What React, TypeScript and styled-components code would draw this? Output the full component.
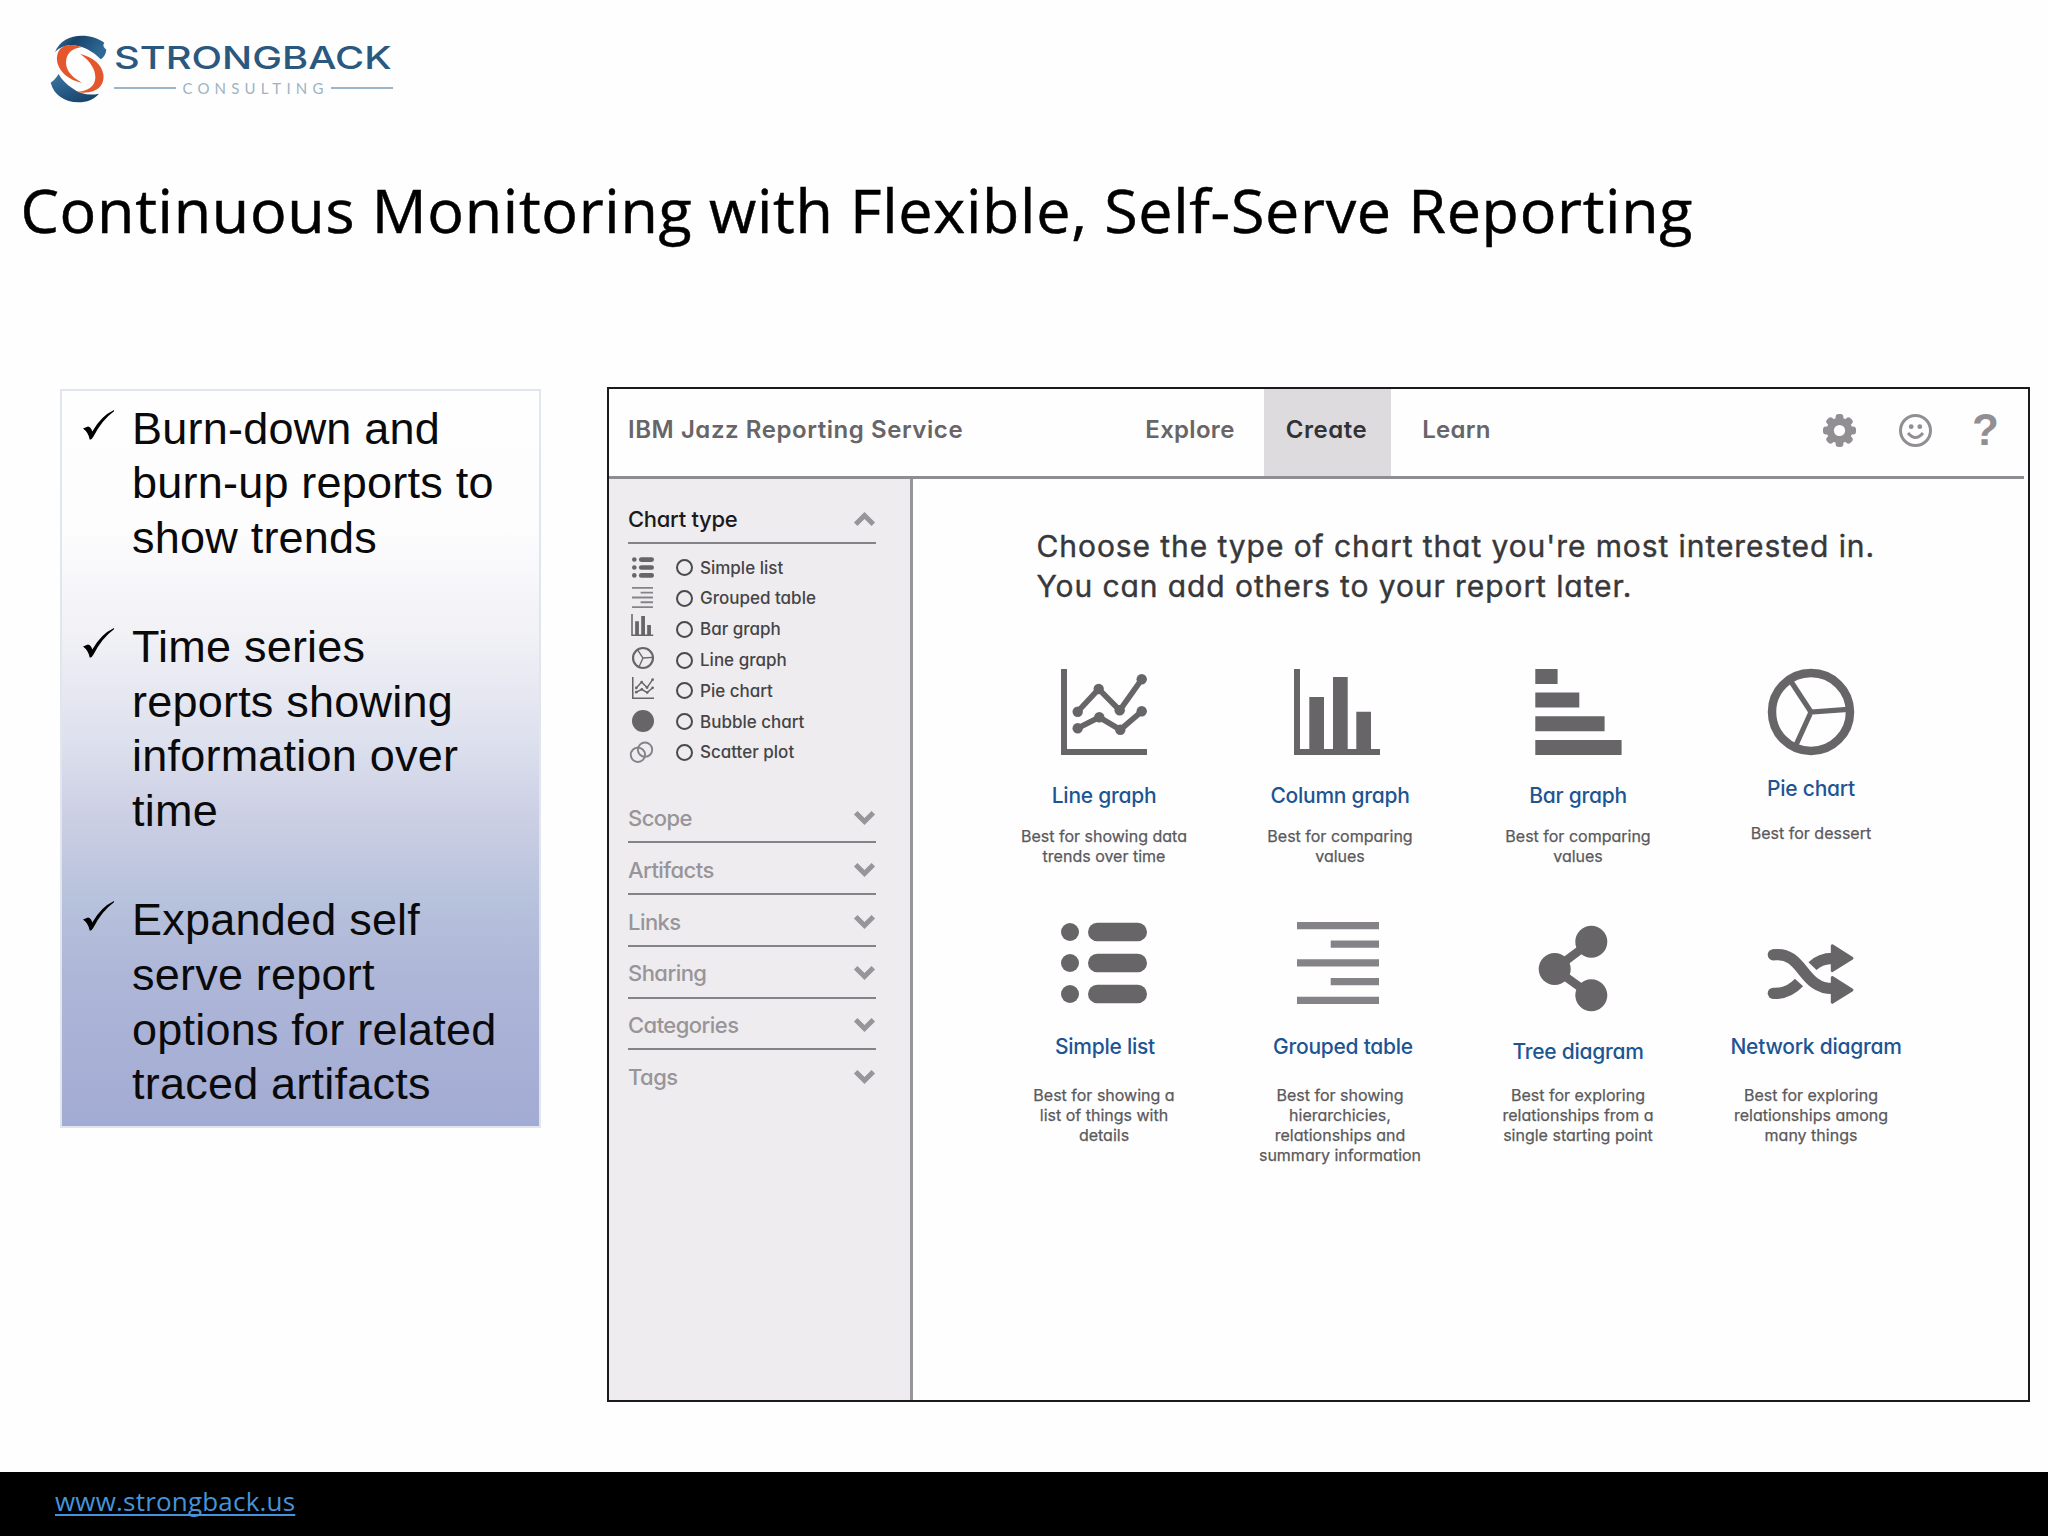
import React from 'react';
import styled, { createGlobalStyle } from 'styled-components';

const inter = '"Inter", "Noto Sans", sans-serif';
const ink = '#676568';
const muted = '#979599';

const GlobalStyle = createGlobalStyle`
  *, *::before, *::after { box-sizing: border-box; }
  body { margin: 0; background: #fefefe; }
  h1, h2, h3, p, ul { margin: 0; padding: 0; font-weight: inherit; }
  ul { list-style: none; }
  svg { display: block; flex: none; overflow: visible; }
`;

/* ---------- slide frame ---------- */

const Slide = styled.div`
  display: flex;
  flex-direction: column;
  width: 2048px;
  height: 1536px;
  overflow: hidden;
  background: #fefefe;
`;

const Brand = styled.header`
  display: flex;
  align-items: flex-start;
  height: 170px;
  padding: 35px 0 0 50px;
`;

const BrandText = styled.div`
  display: flex;
  flex-direction: column;
  width: 279px;
  margin: 4px 0 0 7px;
`;

const BrandName = styled.div`
  width: 214px;
  height: 40px;
  font: 500 31px/38px ${inter};
  color: #2a587f;
  white-space: nowrap;
  transform: scaleX(1.285);
  transform-origin: 0 50%;
`;

const BrandSub = styled.div`
  display: flex;
  align-items: center;
  gap: 6px;
  height: 18px;
  font: 400 15px/18px Lato, sans-serif;
  letter-spacing: 5.2px;
  color: #9db3c4;
  &::before, &::after {
    content: '';
    flex: 1;
    height: 2px;
    background: #9cb5c9;
  }
  &::after { margin-left: -4px; }
`;

const Title = styled.h1`
  height: 80px;
  padding-left: 20.5px;
  font: 400 61px/80px "Open Sans", sans-serif;
  letter-spacing: 0.7px;
  color: #000;
  white-space: nowrap;
  -webkit-text-stroke: 0.5px #000;
`;

const Content = styled.main`
  display: flex;
  align-items: flex-start;
  flex: 1;
  gap: 66px;
  padding: 137px 18px 0 60px;
`;

const Footer = styled.footer`
  display: flex;
  align-items: center;
  height: 64px;
  padding: 0 0 7px 55px;
  background: #000;
`;

const SiteLink = styled.a`
  font: 400 26px/36px "Open Sans", sans-serif;
  letter-spacing: 0.2px;
  color: #4593da;
  text-decoration: underline;
  text-decoration-thickness: 2px;
  text-underline-offset: 3px;
  text-decoration-skip-ink: none;
`;

/* ---------- bullet card ---------- */

const BulletCard = styled.ul`
  display: flex;
  flex-direction: column;
  gap: 54.64px;
  width: 481px;
  height: 739px;
  margin-top: 2px;
  padding: 10.5px 0 0 21px;
  border: 2px solid #e1e5ec;
  background: linear-gradient(#fefefe 0%, #fdfdfe 18%, #f1f1f6 33%, #dee1ee 47%, #cccfe4 58%, #b7c2dc 69%, #aeb6d8 80%, #a2abd3 100%);
`;

const Bullet = styled.li`
  display: flex;
  align-items: flex-start;
  gap: 18px;
  font: 400 45px/54.64px "Liberation Sans", Arial, sans-serif;
  letter-spacing: 0.22px;
  color: #0a0a0a;
  white-space: pre-line;
  svg { margin-top: 8px; }
`;

/* ---------- application window ---------- */

const Window = styled.section`
  display: flex;
  flex-direction: column;
  width: 1423px;
  height: 1015px;
  border: 2px solid #1b1b1d;
  background: #fefefe;
  font-family: ${inter};
  font-feature-settings: "cv11";
`;

const TopBar = styled.div`
  display: flex;
  height: 90px;
  margin-right: 4px;
  border-bottom: 3px solid #8f8d91;
  font-weight: 600;
  font-size: 24px;
  line-height: 30px;
  color: ${ink};
`;

const Product = styled.div`
  display: flex;
  align-items: center;
  width: 507px;
  padding: 0 0 6px 19px;
  letter-spacing: 0.56px;
`;

const Tab = styled.div<{ $width: number; $active?: boolean }>`
  display: flex;
  align-items: center;
  justify-content: center;
  width: ${p => p.$width}px;
  padding: ${p => (p.$active ? '0 2px 6px 0' : '0 0 6px')};
  letter-spacing: ${p => (p.$active ? 0.5 : 0.3)}px;
  color: ${p => (p.$active ? '#333235' : ink)};
  background: ${p => (p.$active ? '#dddbde' : 'transparent')};
`;

const Tools = styled.div`
  display: flex;
  align-items: center;
  gap: 43px;
  margin-left: auto;
  padding: 0 25px 5px 0;
  color: #918f93;
`;

const Help = styled.span`
  width: 27px;
  margin-left: -3px;
  font: 700 44px/40px "Liberation Sans", Arial, sans-serif;
  text-align: center;
`;

const Split = styled.div`
  display: flex;
  flex: 1;
  min-height: 0;
`;

const Sidebar = styled.aside`
  width: 304px;
  padding: 13.5px 34px 0 19px;
  border-right: 3px solid #979599;
  background: #eeecef;
`;

const SectionHead = styled.div<{ $open?: boolean; $last?: boolean }>`
  display: flex;
  align-items: center;
  justify-content: space-between;
  height: 51.8px;
  padding: 3.5px 1px 0 0;
  border-bottom: 2px solid ${p => (p.$last ? 'transparent' : '#858387')};
  font-weight: 500;
  font-size: 22px;
  line-height: 28px;
  letter-spacing: ${p => (p.$open ? -0.3 : -0.55)}px;
  color: ${p => (p.$open ? '#1a1a1c' : muted)};
`;

const Options = styled.ul`
  padding: 8px 0 23.5px;
`;

const Option = styled.li`
  display: flex;
  align-items: center;
  height: 30.8px;
  font-weight: 500;
  font-size: 17px;
  line-height: 22px;
  letter-spacing: 0;
  color: #454447;
`;

const OptionIcon = styled.span<{ $lift: number }>`
  width: 47.5px;
  padding-left: 4px;
  margin-bottom: ${p => p.$lift * 2}px;
`;

const Radio = styled.span`
  width: 17px;
  height: 17px;
  margin-right: 7.5px;
  border: 2px solid #4a494c;
  border-radius: 50%;
`;

const Gallery = styled.div`
  flex: 1;
  padding: 46.5px 0 0 73px;
`;

const Prompt = styled.h2`
  padding-left: 50.5px;
  margin-bottom: 61.5px;
  font-size: 30px;
  line-height: 40.8px;
  letter-spacing: 0.92px;
  color: #38383b;
  -webkit-text-stroke: 0.4px #38383b;
`;

const Grid = styled.div`
  display: grid;
  grid-template-columns: 236px 236px 240px 226px;
  grid-auto-rows: 253px;
`;

const Card = styled.article`
  display: flex;
  flex-direction: column;
  align-items: center;
`;

const CardTitle = styled.h3<{ $above: number; $below: number; $indent?: number }>`
  margin: ${p => p.$above}px 0 ${p => p.$below}px;
  padding-left: ${p => p.$indent ?? 0}px;
  font-weight: 500;
  font-size: 21px;
  line-height: 28px;
  letter-spacing: -0.25px;
  color: #1d5593;
`;

const CardText = styled.p`
  font-size: 16px;
  line-height: 20.2px;
  letter-spacing: 0;
  text-align: center;
  white-space: pre-line;
  color: #5a595c;
  -webkit-text-stroke: 0.25px #5a595c;
`;

/* ---------- drawings ---------- */

type IconProps = { size?: number };

const Glyph = ({ size = 86, children }: IconProps & { children: React.ReactNode }) => (
  <svg width={size} height={size} viewBox="0 0 86 86" fill={ink} stroke="none">
    {children}
  </svg>
);

const LineIcon = ({ size }: IconProps) => {
  const upper = [[16.7, 42.7], [37.7, 20], [58.7, 41.3], [80.7, 10.3]];
  const lower = [[16.7, 59.3], [38.3, 48.3], [59.3, 60.7], [80.7, 42.3]];
  return (
    <Glyph size={size}>
      <path d="M0 0h6v80h80v6H0z" />
      {[upper, lower].map((pts, i) => (
        <g key={i}>
          <polyline points={pts.join(' ')} fill="none" stroke={ink} strokeWidth="5.6" />
          {pts.map(([x, y]) => <circle key={x} cx={x} cy={y} r="5.2" />)}
        </g>
      ))}
    </Glyph>
  );
};

const ColumnIcon = ({ size }: IconProps) => (
  <Glyph size={size}>
    <g transform="translate(-3 0)">
      <path d="M0 0h6v80h80v6H0z" />
      <path d="M15.3 28H30v54H15.3zM39 8h14.7v74H39zM62.3 42.7H77V82H62.3z" />
    </g>
  </Glyph>
);

const BarIcon = () => (
  <Glyph>
    <path d="M.3 0h22.3v15H.3zM.3 23.6h44v15h-44zM.3 47.3h69.3v15H.3zM.3 71h86.3v15H.3z" />
  </Glyph>
);

const PieIcon = ({ size }: IconProps) => (
  <Glyph size={size}>
    <circle cx="43" cy="43" r="39" fill="none" stroke={ink} strokeWidth="8.5" />
    <path d="M22 11 43 43l37-2.7M43 43 28 76" fill="none" stroke={ink} strokeWidth="5.2" />
  </Glyph>
);

const ListIcon = ({ size }: IconProps) => (
  <Glyph size={size}>
    {[10, 41, 72].map(y => (
      <g key={y}>
        <circle cx="9" cy={y} r="9" />
        <rect x="27" y={y - 9.2} width="59" height="18.4" rx="9.2" />
      </g>
    ))}
  </Glyph>
);

const GroupedIcon = ({ size }: IconProps) => (
  <Glyph size={size}>
    <path
      fill="#858387"
      d="M0 0h82v7.2H0zM33.7 18.6H82v7.2H33.7zM0 37.3h82v7.2H0zM33.7 56H82v7.2H33.7zM0 74.8h82V82H0z"
    />
  </Glyph>
);

const TreeIcon = () => (
  <Glyph>
    <path d="M56.3 19.7 19.7 47l36.6 26.3" fill="none" stroke={ink} strokeWidth="8.5" />
    <circle cx="19.7" cy="47" r="16" />
    <circle cx="56.3" cy="19.7" r="16" />
    <circle cx="56.3" cy="73.3" r="16" />
  </Glyph>
);

const NetworkIcon = () => (
  <Glyph>
    <g fill="none" stroke={ink} strokeWidth="11.2">
      <path d="M44.5 44.2C50 38.500 56 36.300 65 36.300" />
      <path d="M5.300 71.300C16 72 24 68 31 60.500" />
      <path d="M5.300 32.800C36 29 33 66.700 65 66.700" />
    </g>
    <circle cx="5.300" cy="71.300" r="5.600" />
    <circle cx="5.300" cy="32.800" r="5.600" />
    <g stroke={ink} strokeWidth="3" strokeLinejoin="round">
      <path d="M64.300 23.800 84 36.300 64.300 48.600z" />
      <path d="M64.300 55.500 84 68 64.300 80.300z" />
    </g>
  </Glyph>
);

const BubbleIcon = ({ size }: IconProps) => (
  <Glyph size={size}>
    <circle cx="43" cy="43" r="43" />
  </Glyph>
);

const ScatterIcon = ({ size }: IconProps) => (
  <Glyph size={size}>
    <g fill="none" stroke="#858387" strokeWidth="7.5">
      <circle cx="23" cy="54" r="28" />
      <circle cx="51" cy="34" r="28" />
    </g>
  </Glyph>
);

const Chevron = ({ up }: { up?: boolean }) => (
  <svg width="21" height="14" viewBox="0 0 21 14" fill="none" stroke={muted} strokeWidth="5">
    <path d={up ? 'M1.700 12.200 10.500 3.500l8.800 8.700' : 'M1.700 1.800l8.800 8.700 8.800-8.700'} />
  </svg>
);

const Check = () => (
  <svg width="31" height="30" viewBox="0 0 31 30" fill="#000">
    <path d="M0 18.500 5 16.500Q8 17 9.300 21.500 18 6 31 0v1.300Q19 10 10.500 26.500 9 29.500 6.800 29.800 5.500 22.500 0 18.500z" />
  </svg>
);

const Gear = () => (
  <svg width="33" height="33" viewBox="-16.500 -16.500 33 33">
    {[0, 45, 90, 135].map(a => (
      <rect key={a} x="-3.900" y="-16.500" width="7.800" height="33" rx="3" fill="currentColor" transform={`rotate(${a})`} />
    ))}
    <circle r="12.800" fill="currentColor" />
    <circle r="5.600" fill="#fefefe" />
  </svg>
);

const Smiley = () => (
  <svg width="33" height="33" viewBox="-16.500 -16.500 33 33" fill="none" stroke="currentColor" strokeWidth="3">
    <circle r="15" />
    <circle cx="-4.300" cy="-3.800" r="2.400" fill="currentColor" stroke="none" />
    <circle cx="4.300" cy="-3.800" r="2.400" fill="currentColor" stroke="none" />
    <path d="M-7.500 2.500Q0 11.500 7.500 2.500" />
  </svg>
);

const BrandMark = () => (
  <svg width="57" height="68" viewBox="60 45 171 204">
    <defs>
      <linearGradient id="navyTop" x1="0" y1="0" x2="1" y2="0.4">
        <stop offset="0" stopColor="#3f79a5" />
        <stop offset="0.4" stopColor="#17436a" />
        <stop offset="1" stopColor="#2f6a97" />
      </linearGradient>
      <linearGradient id="navyBottom" x1="0" y1="0" x2="0.7" y2="1">
        <stop offset="0" stopColor="#3c77a5" />
        <stop offset="1" stopColor="#17436a" />
      </linearGradient>
    </defs>
    <path fill="url(#navyTop)" d="M75 97C88 62 120 47 155 47c27 0 48 7 68 21-5 8-3 12 6 21-1 13-8 23-17 29-16-17-37-31-64-39-30-7-53-4-73 18z" />
    <path fill="url(#navyBottom)" d="M86 162c-8 12-14 19-24 26 9 36 42 59 83 59 26 0 47-9 62-26-28 7-57 1-81-17-17-12-32-25-40-42z" />
    <path fill="#e4572c" d="M155 82c-34-14-66-8-73 22-8 34 22 74 74 84-38-19-52-45-47-70 4-20 19-33 46-36z" />
    <path fill="#e4572c" d="M150 101c42 12 66 34 70 62 5 35-22 63-82 53 36-2 56-16 58-42 1-25-14-50-46-73z" />
  </svg>
);

/* ---------- data ---------- */

const bullets = [
  'Burn-down and\nburn-up reports to\nshow trends',
  'Time series\nreports showing\ninformation over\ntime',
  'Expanded self\nserve report\noptions for related\ntraced artifacts',
];

const options = [
  { label: 'Simple list', icon: ListIcon, lift: 0 },
  { label: 'Grouped table', icon: GroupedIcon, lift: 0.5 },
  { label: 'Bar graph', icon: ColumnIcon, lift: 4 },
  { label: 'Line graph', icon: PieIcon, lift: 2 },
  { label: 'Pie chart', icon: LineIcon, lift: 3 },
  { label: 'Bubble chart', icon: BubbleIcon, lift: 1 },
  { label: 'Scatter plot', icon: ScatterIcon, lift: 0 },
];

const sections = ['Scope', 'Artifacts', 'Links', 'Sharing', 'Categories', 'Tags'];

const charts = [
  { title: 'Line graph', text: 'Best for showing data\ntrends over time', icon: LineIcon, above: 27.5, below: 15.5 },
  { title: 'Column graph', text: 'Best for comparing\nvalues', icon: ColumnIcon, above: 27.5, below: 15.5 },
  { title: 'Bar graph', text: 'Best for comparing\nvalues', icon: BarIcon, above: 27.5, below: 15.5 },
  { title: 'Pie chart', text: 'Best for dessert', icon: PieIcon, above: 20.5, below: 19.5 },
  { title: 'Simple list', text: 'Best for showing a\nlist of things with\ndetails', icon: ListIcon, above: 25.5, below: 23.5, indent: 2 },
  { title: 'Grouped table', text: 'Best for showing\nhierarchicies,\nrelationships and\nsummary information', icon: GroupedIcon, above: 25.5, below: 23.5, indent: 6 },
  { title: 'Tree diagram', text: 'Best for exploring\nrelationships from a\nsingle starting point', icon: TreeIcon, above: 30.5, below: 18.5 },
  { title: 'Network diagram', text: 'Best for exploring\nrelationships among\nmany things', icon: NetworkIcon, above: 25.5, below: 23.5, indent: 10 },
];

export default function App() {
  return (
    <>
      <GlobalStyle />
      <Slide>
        <Brand>
          <BrandMark />
          <BrandText>
            <BrandName>STRONGBACK</BrandName>
            <BrandSub>CONSULTING</BrandSub>
          </BrandText>
        </Brand>
        <Title>Continuous Monitoring with Flexible, Self-Serve Reporting</Title>
        <Content>
          <BulletCard>
            {bullets.map(text => (
              <Bullet key={text}>
                <Check />
                <span>{text}</span>
              </Bullet>
            ))}
          </BulletCard>
          <Window>
            <TopBar>
              <Product>IBM Jazz Reporting Service</Product>
              <Tab $width={148}>Explore</Tab>
              <Tab $width={127} $active>Create</Tab>
              <Tab $width={131}>Learn</Tab>
              <Tools>
                <Gear />
                <Smiley />
                <Help>?</Help>
              </Tools>
            </TopBar>
            <Split>
              <Sidebar>
                <SectionHead $open>
                  Chart type
                  <Chevron up />
                </SectionHead>
                <Options>
                  {options.map(({ label, icon: Icon, lift }) => (
                    <Option key={label}>
                      <OptionIcon $lift={lift}>
                        <Icon size={22} />
                      </OptionIcon>
                      <Radio />
                      {label}
                    </Option>
                  ))}
                </Options>
                {sections.map((name, i) => (
                  <SectionHead key={name} $last={i === sections.length - 1}>
                    {name}
                    <Chevron />
                  </SectionHead>
                ))}
              </Sidebar>
              <Gallery>
                <Prompt>
                  Choose the type of chart that you're most interested in.
                  <br />
                  You can add others to your report later.
                </Prompt>
                <Grid>
                  {charts.map(({ title, text, icon: Icon, above, below, indent }) => (
                    <Card key={title}>
                      <Icon />
                      <CardTitle $above={above} $below={below} $indent={indent}>{title}</CardTitle>
                      <CardText>{text}</CardText>
                    </Card>
                  ))}
                </Grid>
              </Gallery>
            </Split>
          </Window>
        </Content>
        <Footer>
          <SiteLink href="#">www.strongback.us</SiteLink>
        </Footer>
      </Slide>
    </>
  );
}
